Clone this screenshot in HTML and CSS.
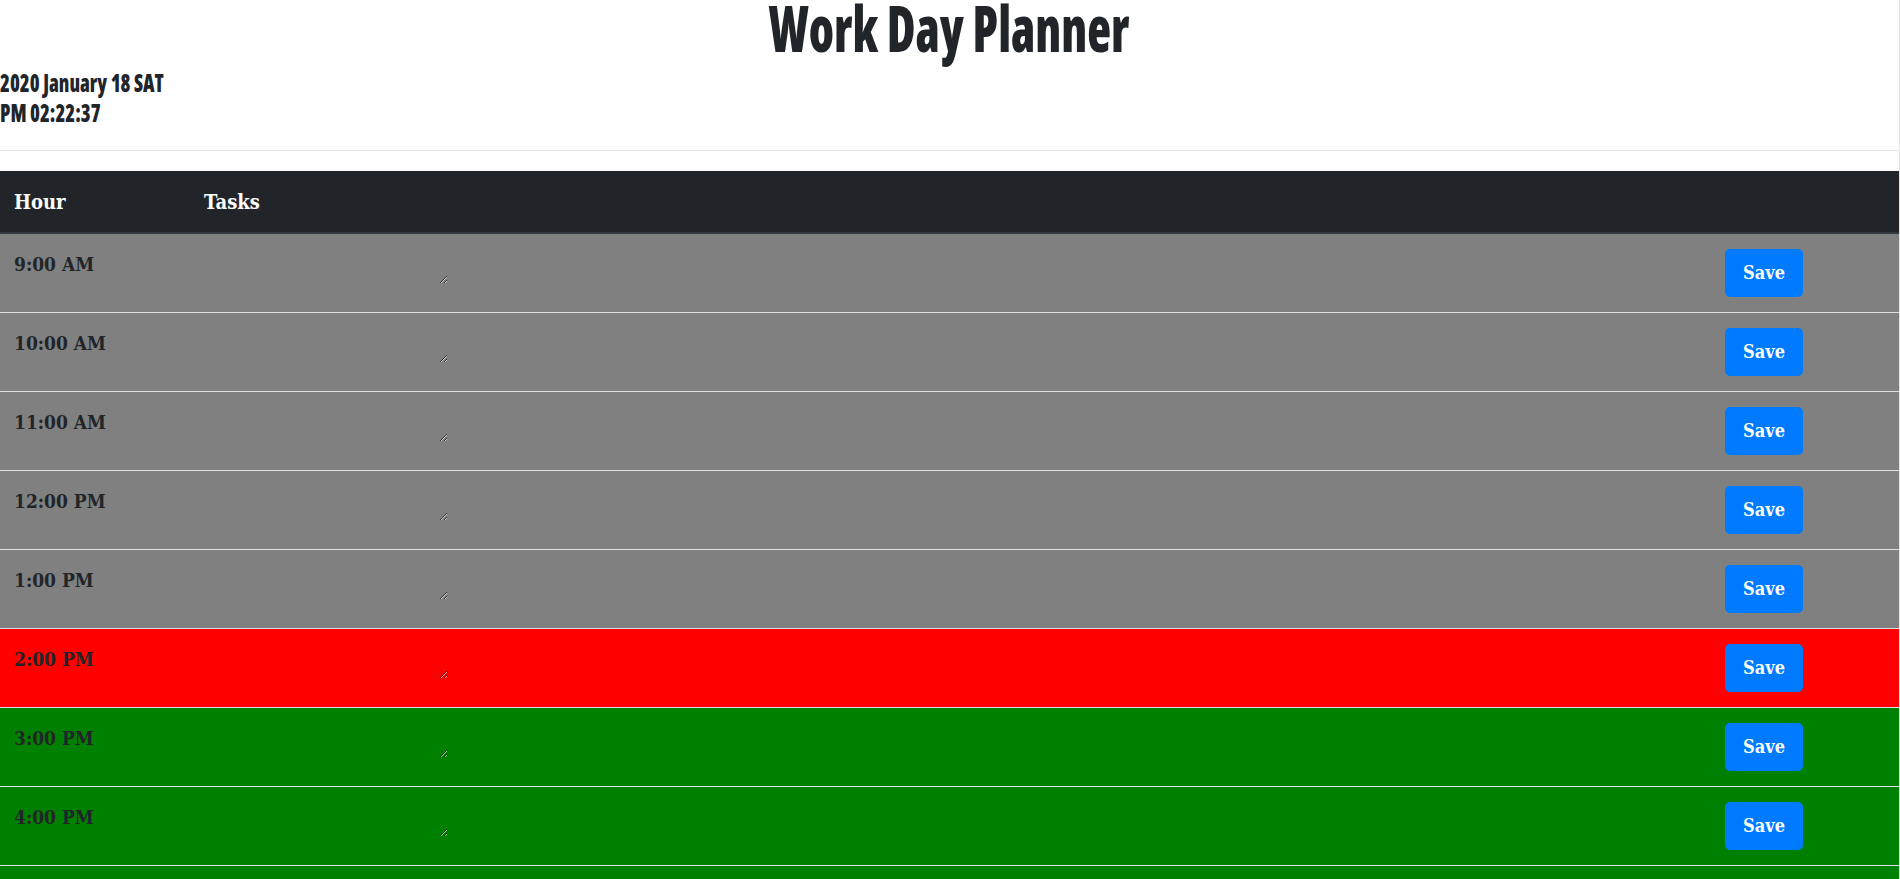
FILE: index.html
```html
<!DOCTYPE html>
<html lang="en">
<head>
<meta charset="utf-8">
<title>Work Day Planner</title>
<link rel="stylesheet" href="styles.css">
</head>
<body>
<header class="jumbo">
  <h1 class="title"><span class="title-text">Work Day Planner</span></h1>
  <div class="clock">
    <p class="clock-line"><span class="clock-text">2020 January 18 SAT</span></p>
    <p class="clock-line"><span class="clock-text">PM 02:22:37</span></p>
  </div>
</header>
<hr class="rule">
<section class="planner">
  <div class="head">
    <div class="cell-hour">Hour</div>
    <div class="cell-task">Tasks</div>
    <div class="cell-save"></div>
  </div>
  <div class="row past">
    <div class="cell-hour">9:00 AM</div>
    <div class="cell-task"><textarea class="task-input"></textarea></div>
    <div class="cell-save"><button class="save-btn">Save</button></div>
  </div>
  <div class="row past">
    <div class="cell-hour">10:00 AM</div>
    <div class="cell-task"><textarea class="task-input"></textarea></div>
    <div class="cell-save"><button class="save-btn">Save</button></div>
  </div>
  <div class="row past">
    <div class="cell-hour">11:00 AM</div>
    <div class="cell-task"><textarea class="task-input"></textarea></div>
    <div class="cell-save"><button class="save-btn">Save</button></div>
  </div>
  <div class="row past">
    <div class="cell-hour">12:00 PM</div>
    <div class="cell-task"><textarea class="task-input"></textarea></div>
    <div class="cell-save"><button class="save-btn">Save</button></div>
  </div>
  <div class="row past">
    <div class="cell-hour">1:00 PM</div>
    <div class="cell-task"><textarea class="task-input"></textarea></div>
    <div class="cell-save"><button class="save-btn">Save</button></div>
  </div>
  <div class="row present">
    <div class="cell-hour">2:00 PM</div>
    <div class="cell-task"><textarea class="task-input"></textarea></div>
    <div class="cell-save"><button class="save-btn">Save</button></div>
  </div>
  <div class="row future">
    <div class="cell-hour">3:00 PM</div>
    <div class="cell-task"><textarea class="task-input"></textarea></div>
    <div class="cell-save"><button class="save-btn">Save</button></div>
  </div>
  <div class="row future">
    <div class="cell-hour">4:00 PM</div>
    <div class="cell-task"><textarea class="task-input"></textarea></div>
    <div class="cell-save"><button class="save-btn">Save</button></div>
  </div>
  <div class="row future">
    <div class="cell-hour">5:00 PM</div>
    <div class="cell-task"><textarea class="task-input"></textarea></div>
    <div class="cell-save"><button class="save-btn">Save</button></div>
  </div>
</section>
</body>
</html>
```

FILE: styles.css
```css
* { box-sizing: border-box; }

html, body {
  margin: 0;
  padding: 0;
}

body {
  background: #ffffff;
  color: #212529;
  font-family: "DejaVu Serif Condensed", "DejaVu Serif", serif;
  border-right: 1px solid #e4e4e4;
  min-height: 100vh;
}

.jumbo {
  padding-top: 0;
}

.title {
  margin: 0;
  height: 59px;
  text-align: center;
  font-family: "Open Sans", "DejaVu Sans Condensed", sans-serif;
  font-stretch: 75%;
  font-weight: 800;
  font-size: 63px;
  line-height: 56px;
  color: #212529;
}

.title-text {
  display: inline-block;
  transform: scaleX(0.78);
  transform-origin: center;
}

.clock {
  margin-top: 8px;
}

.clock-line {
  margin: 0;
  height: 30px;
  font-family: "Open Sans", "DejaVu Sans Condensed", sans-serif;
  font-stretch: 75%;
  font-weight: 800;
  font-size: 25px;
  line-height: 30px;
  color: #212529;
}

.clock-text {
  display: inline-block;
  transform: scaleX(0.8);
  transform-origin: left center;
}

.rule {
  margin: 23px 0 20px 0;
  border: 0;
  border-top: 1px solid #e5e5e5;
  height: 0;
}

.planner {
  display: flex;
  flex-direction: column;
}

.head,
.row {
  display: grid;
  grid-template-columns: 192px 1fr 186px;
}

.head {
  height: 63px;
  background: #212529;
  color: #ffffff;
  font-weight: 700;
  border-bottom: 2px solid #32383e;
}

.row {
  height: 79px;
  border-bottom: 1px solid #dee2e6;
  font-weight: 700;
}

.cell-hour,
.cell-task,
.cell-save {
  padding: 12px 12px;
  font-size: 20px;
  line-height: 36px;
}

.cell-hour {
  padding-left: 14px;
}

.row .cell-hour {
  font-size: 19px;
}

.head .cell-hour,
.head .cell-task {
  padding-top: 13px;
}

.past { background: #808080; }
.present { background: #ff0000; }
.future { background: #008000; }

.cell-task {
  display: flex;
  align-items: flex-start;
}

.task-input {
  width: 244px;
  height: 38px;
  margin: 0;
  padding: 0;
  border: none;
  outline: none;
  background: transparent;
  resize: vertical;
  overflow: auto;
}

.cell-save {
  display: flex;
  align-items: center;
  padding-top: 0;
  padding-bottom: 0;
}

.save-btn {
  width: 78px;
  height: 48px;
  padding: 0;
  border: none;
  border-radius: 5px;
  background: #007bff;
  color: #ffffff;
  font-family: "DejaVu Serif Condensed", "DejaVu Serif", serif;
  font-weight: 700;
  font-size: 18px;
  line-height: 48px;
  cursor: pointer;
}
```
